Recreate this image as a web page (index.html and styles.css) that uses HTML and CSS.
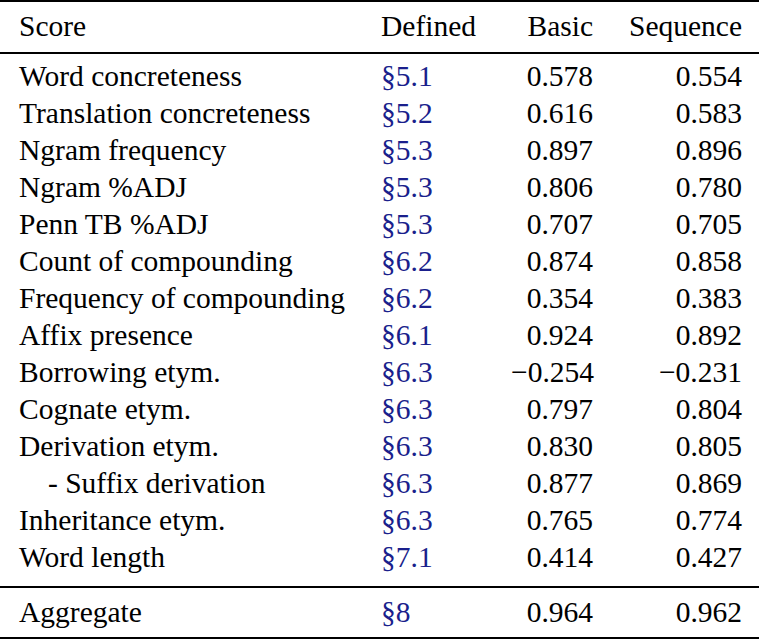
FILE: index.html
```html
<!DOCTYPE html>
<html lang="en">
<head>
<meta charset="utf-8">
<title>Scores</title>
<link rel="stylesheet" href="styles.css">
</head>
<body>
<div class="scores">
  <div class="section head">
    <div class="row"><span>Score</span><span>Defined</span><span class="num">Basic</span><span class="num">Sequence</span></div>
  </div>
  <div class="section body">
    <div class="row"><span>Word concreteness</span><a class="ref">§5.1</a><span class="num">0.578</span><span class="num">0.554</span></div>
    <div class="row"><span>Translation concreteness</span><a class="ref">§5.2</a><span class="num">0.616</span><span class="num">0.583</span></div>
    <div class="row"><span>Ngram frequency</span><a class="ref">§5.3</a><span class="num">0.897</span><span class="num">0.896</span></div>
    <div class="row"><span>Ngram %ADJ</span><a class="ref">§5.3</a><span class="num">0.806</span><span class="num">0.780</span></div>
    <div class="row"><span>Penn TB %ADJ</span><a class="ref">§5.3</a><span class="num">0.707</span><span class="num">0.705</span></div>
    <div class="row"><span>Count of compounding</span><a class="ref">§6.2</a><span class="num">0.874</span><span class="num">0.858</span></div>
    <div class="row"><span>Frequency of compounding</span><a class="ref">§6.2</a><span class="num">0.354</span><span class="num">0.383</span></div>
    <div class="row"><span>Affix presence</span><a class="ref">§6.1</a><span class="num">0.924</span><span class="num">0.892</span></div>
    <div class="row"><span>Borrowing etym.</span><a class="ref">§6.3</a><span class="num">−0.254</span><span class="num">−0.231</span></div>
    <div class="row"><span>Cognate etym.</span><a class="ref">§6.3</a><span class="num">0.797</span><span class="num">0.804</span></div>
    <div class="row"><span>Derivation etym.</span><a class="ref">§6.3</a><span class="num">0.830</span><span class="num">0.805</span></div>
    <div class="row"><span class="sub">- Suffix derivation</span><a class="ref">§6.3</a><span class="num">0.877</span><span class="num">0.869</span></div>
    <div class="row"><span>Inheritance etym.</span><a class="ref">§6.3</a><span class="num">0.765</span><span class="num">0.774</span></div>
    <div class="row"><span>Word length</span><a class="ref">§7.1</a><span class="num">0.414</span><span class="num">0.427</span></div>
  </div>
  <div class="section foot">
    <div class="row"><span>Aggregate</span><a class="ref">§8</a><span class="num">0.964</span><span class="num">0.962</span></div>
  </div>
</div>
</body>
</html>
```
FILE: styles.css
```css
html {
  font-family: "Liberation Serif", serif;
}
body {
  margin: 0;
  font-family: "Liberation Serif", serif;
  font-size: 29.5px;
}
.scores {
  width: 759px;
  border-top: 2px solid #000;
  border-bottom: 2px solid #000;
}
.section.head {
  padding: 6px 0 7px;
  border-bottom: 2px solid #000;
}
.section.body {
  padding: 4px 0 10px;
}
.section.foot {
  padding: 6px 0;
  border-top: 2px solid #000;
}
.row {
  display: grid;
  grid-template-columns: 362px 130px 82px 149px;
  padding: 0 17px 0 19px;
  line-height: 37px;
  white-space: nowrap;
  font-family: "Liberation Serif", serif;
}
.num {
  text-align: right;
}
.sub {
  padding-left: 29px;
}
.ref {
  color: #1a1f8c;
  text-decoration: none;
}
```
